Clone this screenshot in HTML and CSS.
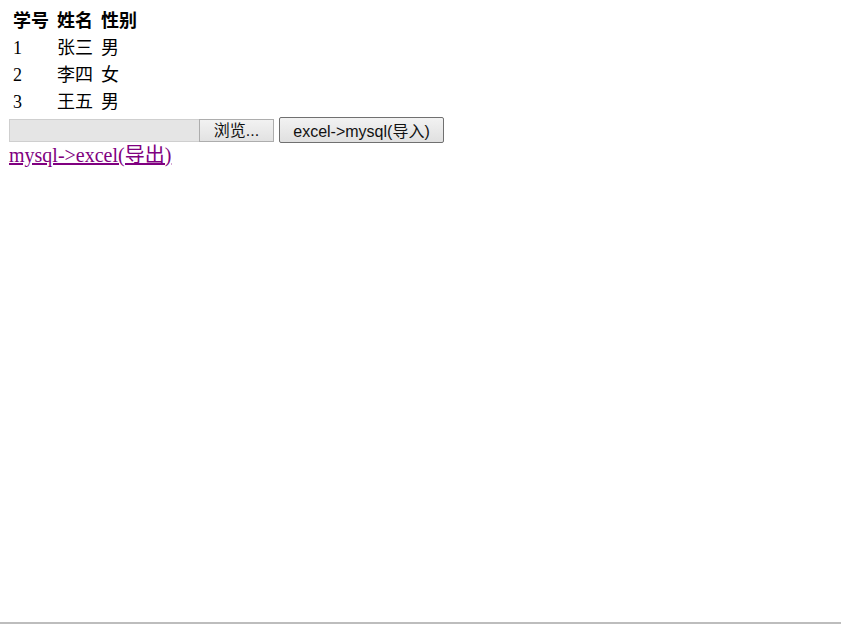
FILE: index.html
```html
<!DOCTYPE html>
<html lang="zh-CN">
<head>
  <meta charset="UTF-8">
  <title>excel导入导出</title>
  <link rel="stylesheet" href="styles.css">
</head>
<body>
  <table class="list">
    <tr><th>学号</th><th>姓名</th><th>性别</th></tr>
    <tr><td>1</td><td>张三</td><td>男</td></tr>
    <tr><td>2</td><td>李四</td><td>女</td></tr>
    <tr><td>3</td><td>王五</td><td>男</td></tr>
  </table>

  <form class="upload" onsubmit="event.preventDefault();">
    <label class="file">
      <span class="file-name"></span>
      <span class="file-btn">浏览...</span>
    </label>
    <button type="submit" class="submit">excel-&gt;mysql(导入)</button>
  </form>
  <a class="export" href="#">mysql-&gt;excel(导出)</a>
</body>
</html>
```

FILE: styles.css
```css
html { height: 624px; box-sizing: border-box; border-bottom: 2px solid #bdbdbd; }
body { margin: 7px 8px 8px; font-family: "Liberation Serif", "Noto Sans CJK SC", serif; font-size: 18px; color: #000; }
.list { border-spacing: 2px; }
.list th, .list td { padding: 1px 3px; line-height: 23px; text-align: left; font-weight: normal; }
.list th { font-weight: bold; }
.upload { display: flex; align-items: center; margin-left: 1px; height: 26px; }
.file { display: flex; height: 23px; font-family: "Liberation Sans", "Noto Sans CJK SC", sans-serif; font-size: 16px; }
.file-name { width: 189px; background: #e5e5e5; border: 1px solid #cfcfcf; border-right: none; }
.file-btn { width: 73px; border: 1px solid #adadad; background: linear-gradient(#f2f2f2, #e2e2e2); text-align: center; line-height: 21px; color: #111; }
.submit {
  margin-left: 5px;
  height: 26px;
  width: 165px;
  padding: 0;
  font-family: "Liberation Sans", "Noto Sans CJK SC", sans-serif;
  font-size: 16px;
  color: #111;
  border: 1px solid #707070;
  border-radius: 2px;
  background: linear-gradient(#f2f2f2, #e0e0e0);
}
.export { display: inline-block; margin-left: 1px; color: #800080; font-size: 20px; line-height: 24px; }
```
